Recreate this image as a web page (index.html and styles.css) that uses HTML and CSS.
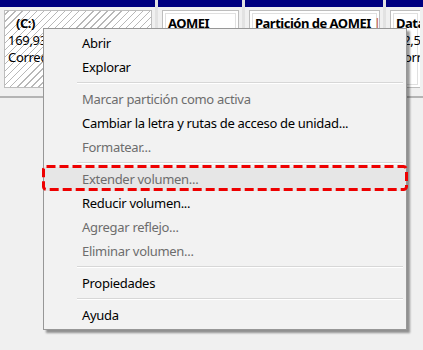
FILE: index.html
```html
<!DOCTYPE html>
<html>
<head>
    <meta charset="utf-8">
    <title>Administración de discos</title>
    <link rel="stylesheet" href="styles.css">
</head>
<body>
    <div class="disks">
        <div class="col">
            <div class="bar"></div>
            <div class="slot">
                <div class="part hatched">
                    <b>(C:)</b>
                    <span>169,93 GB NTFS</span>
                    <span>Correcto (Arranque)</span>
                </div>
            </div>
        </div>
        <div class="col">
            <div class="bar"></div>
            <div class="slot">
                <div class="part">
                    <b>AOMEI</b>
                    <span>20,00 GB</span>
                    <span>Correcto</span>
                </div>
            </div>
        </div>
        <div class="col">
            <div class="bar"></div>
            <div class="slot">
                <div class="part">
                    <b>Partición de AOMEI<i class="mark">|</i></b>
                    <span>10,00 GB</span>
                    <span>Correcto</span>
                </div>
            </div>
        </div>
        <div class="col">
            <div class="bar"></div>
            <div class="slot">
                <div class="part last">
                    <b>Data</b>
                    <span>22,50 GB</span>
                    <span>Correcto</span>
                </div>
            </div>
        </div>
    </div>

    <div class="menu">
        <div class="item">Abrir</div>
        <div class="item">Explorar</div>
        <div class="sep"></div>
        <div class="item off">Marcar partición como activa</div>
        <div class="item">Cambiar la letra y rutas de acceso de unidad...</div>
        <div class="item off">Formatear...</div>
        <div class="sep"></div>
        <div class="item off hot">Extender volumen...
            <svg class="ring" width="366" height="26" viewBox="0 0 366 26">
                <rect x="1.5" y="1.5" width="363" height="23" rx="3" fill="none" stroke="#ee0000" stroke-width="3" stroke-dasharray="9 4"/>
            </svg>
        </div>
        <div class="item">Reducir volumen...</div>
        <div class="item off">Agregar reflejo...</div>
        <div class="item off">Eliminar volumen...</div>
        <div class="sep"></div>
        <div class="item">Propiedades</div>
        <div class="sep"></div>
        <div class="item">Ayuda</div>
    </div>
</body>
</html>
```

FILE: styles.css
```css
body {
    margin: 0;
    background: #f0f0f0;
    font-family: "Noto Sans", "Open Sans", sans-serif;
    font-size: 13px;
    letter-spacing: -0.3px;
    color: #000;
    width: 423px;
    height: 350px;
    overflow: hidden;
    position: relative;
}

.disks {
    display: grid;
    grid-template-columns: 155px 84px 138px 1fr;
    column-gap: 3px;
    border-bottom: 2px solid #b4b4b4;
    background: #e2e2e2;
}

.col {
    background: #f0f0f0;
    min-width: 0;
}

.bar {
    height: 7px;
    background: #000080;
}

.slot {
    padding: 3px 3px 8px 4px;
}

.part {
    height: 72px;
    border: 1px solid #bdbdbd;
    background: #fff;
    padding: 4px 0 0 5px;
    display: flex;
    flex-direction: column;
    line-height: 17px;
    white-space: nowrap;
    overflow: hidden;
    box-shadow: inset 0 0 0 2px #fff, inset 0 0 0 3px #e0e0e0;
}

.part.hatched {
    padding-left: 3px;
    background: repeating-linear-gradient(-45deg, #fff 0, #fff 4px, #b8b8b8 4px, #b8b8b8 5px);
    box-shadow: none;
}

.part.hatched b {
    padding-left: 8px;
}

.part.last {
    border-right: none;
}

.part b {
    font-weight: bold;
    letter-spacing: -0.5px;
}

.mark {
    font-style: normal;
    font-weight: normal;
    margin-left: 3px;
    color: #c0502c;
}

.menu {
    position: absolute;
    left: 43px;
    top: 28px;
    width: 362px;
    padding: 2px 0;
    background: #f2f2f2;
    border: 1px solid #979797;
    box-shadow: 3px 3px 2px rgba(0, 0, 0, 0.4);
}

.item {
    position: relative;
    height: 24px;
    line-height: 24px;
    padding-left: 38px;
    white-space: nowrap;
}

.item.off {
    color: #6d6d6d;
}

.item.hot {
    background: #e6e6e6;
}

.ring {
    position: absolute;
    left: -2px;
    top: -2px;
}

.sep {
    height: 0;
    margin: 3px 3px 3px 33px;
    border-top: 1px solid #d7d7d7;
    border-bottom: 1px solid #fff;
}
```
